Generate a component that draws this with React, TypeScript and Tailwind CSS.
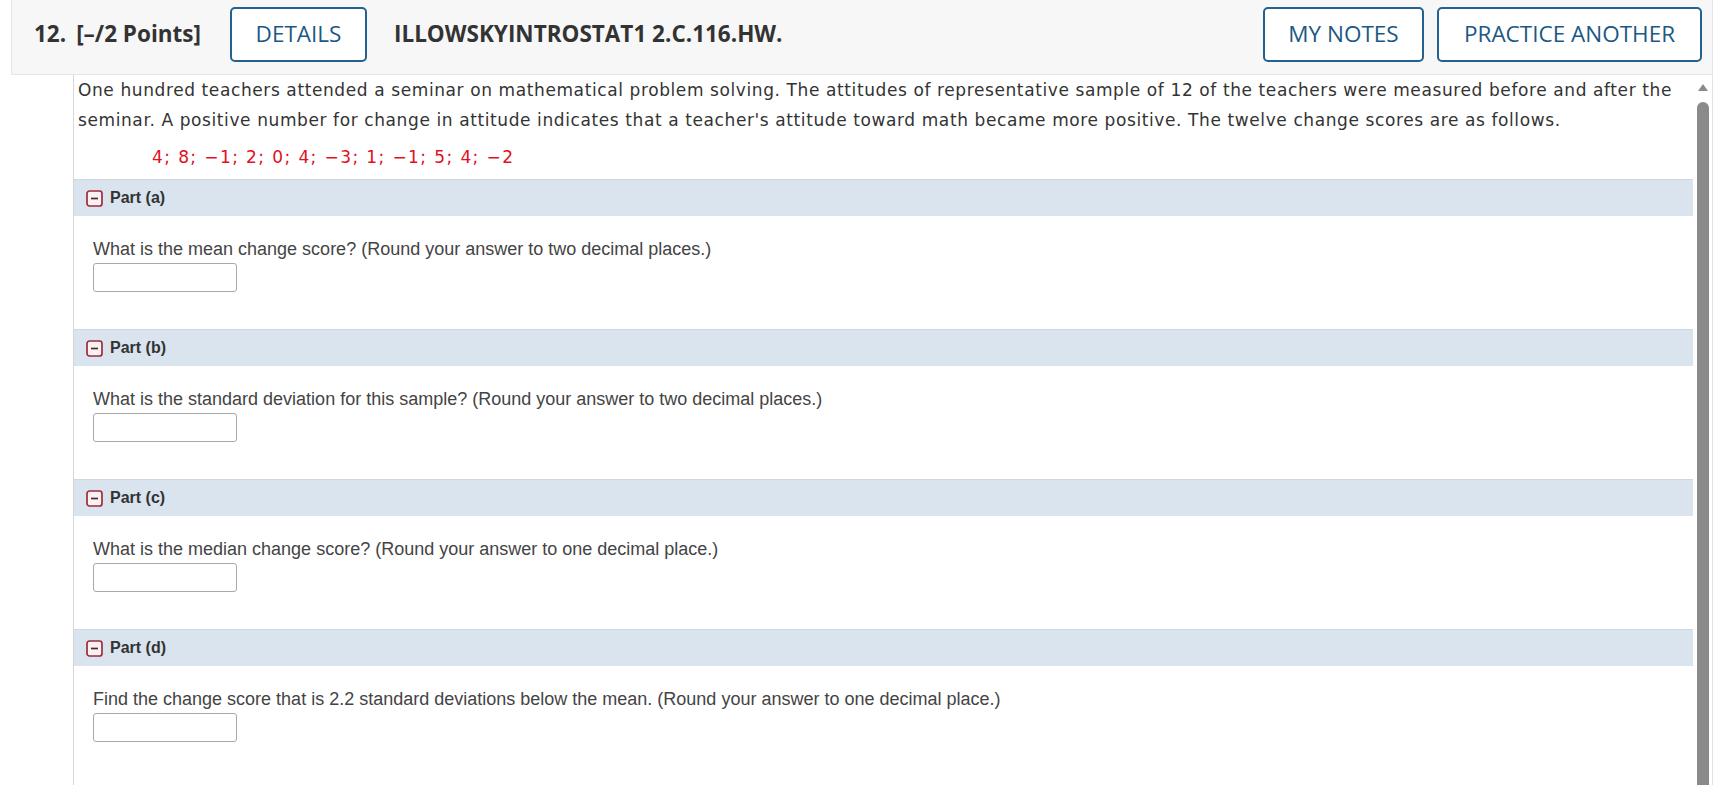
import React from "react";

const parts = [
  { label: "a", question: "What is the mean change score? (Round your answer to two decimal places.)" },
  { label: "b", question: "What is the standard deviation for this sample? (Round your answer to two decimal places.)" },
  { label: "c", question: "What is the median change score? (Round your answer to one decimal place.)" },
  { label: "d", question: "Find the change score that is 2.2 standard deviations below the mean. (Round your answer to one decimal place.)" },
];

function CollapseIcon() {
  return (
    <svg width="17" height="17" viewBox="0 0 17 17" className="shrink-0">
      <rect x="1" y="1" width="15" height="15" rx="2.5" fill="#fbf1f2" stroke="#9b2d3a" strokeWidth="1.7" />
      <line x1="5" y1="8.5" x2="12" y2="8.5" stroke="#4a2a2e" strokeWidth="1.7" />
    </svg>
  );
}

function HeaderButton({ label, width }: { label: string; width: string }) {
  return (
    <button
      className={`${width} h-[55px] rounded-[5px] border-2 border-[#25618f] bg-white text-[22.5px] text-[#1c5883] flex items-center justify-center`}
    >
      {label}
    </button>
  );
}

export default function App() {
  return (
    <div className="w-[1722px] h-[785px] overflow-hidden bg-white">
      <div className="ml-[11px] w-[1702px]">
        <div
          className="h-[75px] bg-[#f7f7f7] border border-t-0 border-[#e6e6e6] flex items-center pb-[6px] pl-[22px] pr-[10px] text-[#333]"
          style={{ fontFamily: '"Open Sans", "Liberation Sans", sans-serif' }}
        >
          <span className="text-[22.5px] font-bold">12.</span>
          <span className="text-[22.5px] font-bold ml-[10px]">[–/2 Points]</span>
          <div className="ml-[29px]">
            <HeaderButton label="DETAILS" width="w-[137px]" />
          </div>
          <span className="text-[22.5px] font-bold ml-[27px]">ILLOWSKYINTROSTAT1 2.C.116.HW.</span>
          <div className="ml-auto flex gap-[13px]">
            <HeaderButton label="MY NOTES" width="w-[161px]" />
            <HeaderButton label="PRACTICE ANOTHER" width="w-[265px]" />
          </div>
        </div>

        <div className="flex h-[710px]">
          <div className="w-[62px] shrink-0" />
          <div className="flex-1 border-l border-[#d6d6d6] overflow-hidden">
            <div
              className="pl-[4px] pr-[10px] text-[17px] leading-[30px] text-[#333]"
              style={{ fontFamily: '"DejaVu Sans", Verdana, sans-serif' }}
            >
              <p className="tracking-[0.6px]">
                One hundred teachers attended a seminar on mathematical problem solving. The attitudes of representative sample of 12 of the teachers were measured before and after the seminar. A positive number for change in attitude indicates that a teacher's attitude toward math became more positive. The twelve change scores are as follows.
              </p>
              <p className="pl-[74px] mt-[7px] mb-[7px] tracking-[1.4px] text-[#e0101e]">4; 8; −1; 2; 0; 4; −3; 1; −1; 5; 4; −2</p>
            </div>

            {parts.map((p) => (
              <div key={p.label} style={{ fontFamily: '"Liberation Sans", Arial, sans-serif' }}>
                <div className="h-[37px] bg-[#d9e4ee] border-t border-[#cfd8e0] flex items-center pl-[12px] gap-[7px]">
                  <CollapseIcon />
                  <span className="text-[16px] font-bold text-[#333]">Part ({p.label})</span>
                </div>
                <div className="pl-[19px] pt-[23px] pb-[37px]">
                  <div className="text-[18px] leading-[20px] text-[#444]">{p.question}</div>
                  <input
                    type="text"
                    className="mt-[4px] block w-[144px] h-[29px] rounded-[3px] border border-[#a9a9a9] bg-white"
                  />
                </div>
              </div>
            ))}
          </div>
          <div className="w-[20px] shrink-0 border-r border-[#e2e2e2] flex flex-col items-center pt-[9px]">
            <div className="w-0 h-0 border-l-[5px] border-r-[5px] border-b-[7px] border-l-transparent border-r-transparent border-b-[#8a8a8a]" />
            <div className="mt-[11px] w-[12px] flex-1 rounded-t-full bg-[#8a8a8a]" />
          </div>
        </div>
      </div>
    </div>
  );
}
